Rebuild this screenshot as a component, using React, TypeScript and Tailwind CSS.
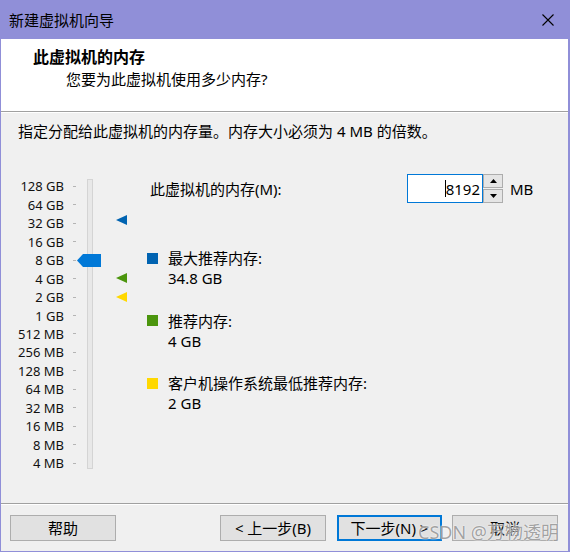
import React from "react";

const labels = [
  "128 GB",
  "64 GB",
  "32 GB",
  "16 GB",
  "8 GB",
  "4 GB",
  "2 GB",
  "1 GB",
  "512 MB",
  "256 MB",
  "128 MB",
  "64 MB",
  "32 MB",
  "16 MB",
  "8 MB",
  "4 MB",
];

function Marker({ color, top }: { color: string; top: number }) {
  return (
    <svg
      className="absolute left-[115px]"
      style={{ top }}
      width="11"
      height="10"
      viewBox="0 0 11 10"
    >
      <polygon points="0,5 11,0 11,10" fill={color} />
    </svg>
  );
}

function Legend({ color, title, value }: { color: string; title: string; value: string }) {
  return (
    <div className="flex flex-col">
      <div className="flex items-center h-[20px]">
        <div className={`w-[11px] h-[11px] ${color}`} />
        <span className="ml-[10px] leading-[20px]">{title}</span>
      </div>
      <div className="pl-[21px] leading-[20px]">{value}</div>
    </div>
  );
}

export default function App() {
  return (
    <div
      className="w-[570px] h-[552px] bg-[#908fd8] flex flex-col text-black"
      style={{ fontFamily: '"Noto Sans", "Noto Sans CJK SC", sans-serif' }}
    >
      {/* Title bar */}
      <div className="h-[39px] shrink-0 flex items-center pl-[9px]">
        <span className="text-[15px] leading-[20px]">新建虚拟机向导</span>
        <svg className="ml-auto mr-[16px]" width="12" height="12" viewBox="0 0 12 12">
          <path d="M0.5 0.5 L11.5 11.5 M11.5 0.5 L0.5 11.5" stroke="#000" strokeWidth="1.1" />
        </svg>
      </div>

      {/* Client */}
      <div className="flex-1 ml-[1px] mr-[2px] mb-[1px] flex flex-col bg-[#f0f0f0] relative">
        {/* Header */}
        <div className="h-[72px] shrink-0 bg-white pt-[8px] pl-[32px]">
          <div className="text-[16px] font-bold leading-[20px]">此虚拟机的内存</div>
          <div className="mt-[2px] pl-[33px] text-[15px] leading-[20px]">您要为此虚拟机使用多少内存?</div>
        </div>
        <div className="h-px bg-[#a0a0a0]" />
        <div className="h-px bg-white" />

        {/* Body */}
        <div className="flex-1 flex flex-col text-[15px]">
          <div className="pt-[8px] pl-[17px] leading-[20px]">
            指定分配给此虚拟机的内存量。内存大小必须为 4 MB 的倍数。
          </div>
          <div className="mt-[33px] flex">
            {/* Slider */}
            <div className="relative w-[135px] shrink-0 pt-[3px]">
              {labels.map((l) => (
                <div key={l} className="h-[18.47px] flex items-center">
                  <span className="w-[63px] text-right text-[13px] leading-[16px] text-[#111]">{l}</span>
                  <span className="ml-[9px] w-[3px] h-px bg-[#b4b4b4]" />
                </div>
              ))}
              <div className="absolute left-[86px] top-[5px] w-[6px] h-[290px] border border-[#d4d4d4] bg-[#e8e8e8]" />
              <svg className="absolute left-[76px] top-[80px]" width="24" height="13" viewBox="0 0 24 13">
                <polygon points="0,6.5 6,0 24,0 24,13 6,13" fill="#0078d7" />
              </svg>
              <Marker color="#0063b1" top={41} />
              <Marker color="#4b950d" top={99} />
              <Marker color="#ffd800" top={118} />
            </div>

            {/* Right panel */}
            <div className="flex-1 pl-[11px] flex flex-col">
              <div className="h-[29px] flex items-center">
                <span className="ml-[3px] w-[257px] leading-[20px]">此虚拟机的内存(M):</span>
                <div className="w-[76px] h-[29px] border border-[#0078d7] bg-white flex items-center justify-end pr-[2px]">
                  <span className="w-px h-[17px] bg-black" />
                  <span className="text-[15px] leading-[20px]">8192</span>
                </div>
                <div className="w-[20px] h-[29px] flex flex-col gap-px">
                  <div className="flex-1 border border-[#adadad] bg-[#e5e5e5] flex items-center justify-center">
                    <svg width="7" height="4" viewBox="0 0 7 4">
                      <polygon points="3.5,0 7,4 0,4" fill="#000" />
                    </svg>
                  </div>
                  <div className="flex-1 border border-[#adadad] bg-[#e5e5e5] flex items-center justify-center">
                    <svg width="7" height="4" viewBox="0 0 7 4">
                      <polygon points="0,0 7,0 3.5,4" fill="#000" />
                    </svg>
                  </div>
                </div>
                <span className="ml-[7px] leading-[20px]">MB</span>
              </div>

              <div className="mt-[45px] flex flex-col gap-[22.5px]">
                <Legend color="bg-[#0063b1]" title="最大推荐内存:" value="34.8 GB" />
                <Legend color="bg-[#4b950d]" title="推荐内存:" value="4 GB" />
                <Legend color="bg-[#ffd800]" title="客户机操作系统最低推荐内存:" value="2 GB" />
              </div>
            </div>
          </div>
        </div>

        {/* Footer */}
        <div className="h-px bg-[#a0a0a0]" />
        <div className="h-px bg-white" />
        <div className="h-[46px] shrink-0 pt-[10px] pl-[9px] flex text-[15px]">
          <button className="w-[106px] h-[26px] border border-[#adadad] bg-[#e1e1e1] flex items-center justify-center leading-[20px]">
            帮助
          </button>
          <button className="ml-[104px] w-[106px] h-[26px] border border-[#adadad] bg-[#e1e1e1] flex items-center justify-center leading-[20px]">
            &lt; 上一步(B)
          </button>
          <button className="ml-[11px] w-[105px] h-[26px] border-2 border-[#0078d7] bg-[#e1e1e1] flex items-center justify-center leading-[20px]">
            下一步(N) &gt;
          </button>
          <button className="ml-[10px] w-[106px] h-[26px] border border-[#adadad] bg-[#e1e1e1] flex items-center justify-center leading-[20px]">
            取消
          </button>
        </div>

        {/* Watermark */}
        <div className="absolute left-[417px] top-[482px] text-[18px] leading-[22px] text-[#9c9c9c] opacity-90 [text-shadow:0_0_2px_#ffffff,0_0_1px_#ffffff] pointer-events-none whitespace-nowrap">
          CSDN @万物透明
        </div>
      </div>
    </div>
  );
}
